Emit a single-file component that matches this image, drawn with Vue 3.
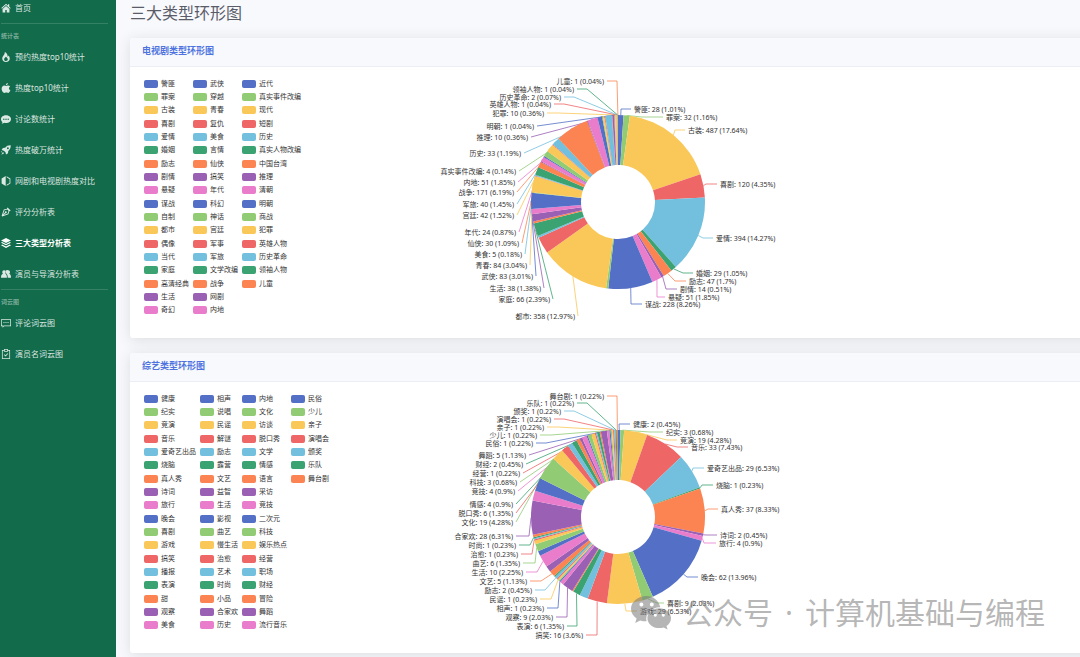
<template>
  <div class="layout">
    <!-- 侧边栏 -->
    <nav class="sidebar">
      <a href="#" class="nav-link home">
        <svg class="icon" viewBox="0 0 16 16"><path d="M8 1 0.5 8l1 1.200L8 3.200l6.500 6 1-1.200L13.200 5.800V2h-2v2zM8 4.600 2.500 9.700V15h4.300v-4h2.400v4h4.300V9.700z" /></svg>
        <span>首页</span>
      </a>
      <template v-for="group in menu" :key="group.title">
        <hr class="divider" />
        <div class="group-title">{{ group.title }}</div>
        <a v-for="item in group.items" :key="item.text" href="#" class="nav-link"
          :class="{ active: item.text === current }" @click.prevent="current = item.text">
          <svg class="icon" viewBox="0 0 16 16"><path :d="icons[item.icon]" fill-rule="evenodd" /></svg>
          <span>{{ item.text }}</span>
        </a>
      </template>
    </nav>

    <!-- 主内容 -->
    <main class="content">
      <h1 class="page-title">三大类型环形图</h1>
      <section v-for="chart in charts" :key="chart.title" class="card">
        <h2 class="card-header">{{ chart.title }}</h2>
        <div class="card-body">
          <ul class="legend">
            <li v-for="s in chart.slices" :key="s.name">
              <i class="swatch" :style="{ background: s.color }"></i>{{ s.name }}
            </li>
          </ul>
          <svg class="donut" viewBox="-190 -128 380 250" role="img" :aria-label="chart.title">
            <!-- 引线在扇形下层 -->
            <polyline v-for="s in chart.labels" :key="s.name" :points="s.line" :stroke="s.color" class="guide" />
            <path v-for="s in chart.slices" :key="s.name" :d="s.path" :fill="s.color" />
            <text v-for="s in chart.labels" :key="s.name" :x="s.textX" :y="s.y" :text-anchor="s.anchor"
              class="label">{{ s.text }}</text>
          </svg>
        </div>
      </section>
    </main>

    <!-- 水印 -->
    <div class="watermark">
      <svg class="wechat" viewBox="0 0 40 34">
        <path fill-rule="evenodd" d="M15.500 0C7 0 0 5.700 0 12.800c0 4 2.200 7.400 5.600 9.800L4.200 27l5-2.600c2 .6 4 1 6.300.9-1.600-7.300 4.500-14 13.800-14C28 4.800 22.300 0 15.500 0zM10.400 6.500a2 2 0 1 1 0 4 2 2 0 0 1 0-4zm10.400 0a2 2 0 1 1 0 4 2 2 0 0 1 0-4z" />
        <path fill-rule="evenodd" d="M28.300 12.300c-6.700 0-11.900 4.400-11.900 9.900s5.200 9.900 11.900 9.900c1.500 0 3-.3 4.300-.7l4 2.200-1.100-3.700c2.800-1.800 4.500-4.600 4.500-7.700 0-5.500-5.200-9.900-11.700-9.900zm-4 5.200a1.600 1.600 0 1 1 0 3.200 1.600 1.600 0 0 1 0-3.200zm8 0a1.600 1.600 0 1 1 0 3.200 1.600 1.600 0 0 1 0-3.200z" />
      </svg>
      <span>公众号</span>
      <span>·</span>
      <span>计算机基础与编程</span>
    </div>
  </div>
</template>

<script setup>
import { ref } from 'vue'

const current = ref('三大类型分析表')

const menu = [
  {
    title: '统计表',
    items: [
      { text: '预约热度top10统计', icon: 'fire' },
      { text: '热度top10统计', icon: 'apple' },
      { text: '讨论数统计', icon: 'chat' },
      { text: '热度破万统计', icon: 'rocket' },
      { text: '网剧和电视剧热度对比', icon: 'half' },
      { text: '评分分析表', icon: 'pen' },
      { text: '三大类型分析表', icon: 'layers' },
      { text: '演员与导演分析表', icon: 'people' }
    ]
  },
  {
    title: '词云图',
    items: [
      { text: '评论词云图', icon: 'message' },
      { text: '演员名词云图', icon: 'clipboard' }
    ]
  }
]

const icons = {
  fire: 'M8 16c3.500 0 6-2.200 6-5.600 0-2-.8-3.600-2-4.900-.2 1-.7 1.700-1.500 2.100C11 4.500 9.200 1.300 6 0c.3 2.700-.8 4-2 5.500C2.800 7 2 8.400 2 10.400 2 13.800 4.500 16 8 16zm0-1.500c-1.800 0-3-1.200-3-2.900 0-1.600 1.200-2.500 2.600-4.200 1.800 1.200 3.300 2.500 3.300 4.300 0 1.600-1.200 2.800-2.900 2.800z',
  apple: 'M11 0c.2 1.800-1.400 3.700-3.200 3.700C7.600 2 9.200.2 11 0zM8.200 4.600c.8 0 1.700-.8 3-.8 1.500 0 2.600.7 3.300 1.700-2.700 1.600-2.300 5 .5 6.100-.8 2-2.100 4.200-3.700 4.200-1.200 0-1.600-.7-3-.7s-1.900.7-3 .7C3 15.800 1 12.400 1 9.200 1 6 3 4 5.200 4c1.300 0 2.200.6 3 .6z',
  chat: 'M8 2c4.400 0 8 2.700 8 6.200s-3.600 6.200-8 6.200c-.9 0-1.800-.1-2.600-.3C4.500 14.700 2.900 15.500 1 15.700c.7-.9 1.100-1.800 1.200-2.800C.8 11.700 0 10 0 8.200 0 4.700 3.600 2 8 2zM4.500 7a1.200 1.200 0 1 0 0 2.400 1.200 1.200 0 0 0 0-2.400zM8 7a1.200 1.200 0 1 0 0 2.400A1.200 1.200 0 0 0 8 7zm3.500 0a1.200 1.200 0 1 0 0 2.400 1.200 1.200 0 0 0 0-2.400z',
  rocket: 'M15.500.5c.3 4-1 6.700-4 9.300l-.3 3.200-3.200 2-.8-3.500L4.500 9 1 8l2-3.200 3.500-.3C9 1.500 11.500.3 15.500.5zM11 3.600a1.500 1.500 0 1 0 0 3 1.500 1.500 0 0 0 0-3zM3 11l2 2-4.500 2.500zM0 10l1.500.5L0 12.500z',
  half: 'M7.500 0v16L1 12V4zM9 .3l6 3.800v7.800l-6 3.800v-1.600l4.700-3V5L9 2z',
  pen: 'M10.600.6l4.800 4.800-1.200 1.200-.8-.4-1.500 5.300L2 15l-1-1 3.500-9.900 5.300-1.500-.4-.8zM10 4 5.600 5.200 3.300 11.800l3-3a1.500 1.500 0 1 1 1 1l-3 3 6.500-2.300L12 6z',
  layers: 'M8 0l8 4-8 4-8-4zM1.800 6.500 8 9.600l6.200-3.100L16 7.400l-8 4-8-4zM1.800 10.500 8 13.600l6.200-3.100 1.800.9L8 16l-8-4.600z',
  people: 'M5 2a3 3 0 0 1 1.800 5.400C8.500 8 9.500 9.500 9.500 14H0c0-4.500 1.200-6 3.200-6.600A3 3 0 0 1 5 2zm6.500 0a3 3 0 0 1 1.700 5.400C15 8 16 9.500 16 14h-5.200c0-3.500-.6-5.500-2-6.600A3 3 0 0 1 11.500 2z',
  message: 'M0 2h16v11H5l-2.500 2.500V13H0zm1.200 1.200v8.600h2.500v1l1-1h10.100V3.200zM4 6.500h1.500V8H4zm3.200 0h1.500V8H7.200zm3.300 0H12V8h-1.500z',
  clipboard: 'M5 0h6v1.500h3.500V16h-13V1.500H5zm1.200 1.200v2h3.600v-2zM5 2.700H2.700v12.100h10.600V2.700H11v1.700H5zm5.600 4 .9.900-4.200 4.200L4.800 9.400l.9-.9 1.600 1.600z'
}

const palette = ['#5470c6', '#91cc75', '#fac858', '#ee6666', '#73c0de', '#3ba272', '#fc8452', '#9a60b4', '#ea7ccc']

// [名称, 数值, 占比, 引线终点x, 引线y, 拐点x]，没有占比的不显示标签
const tvData = [
  ['警匪', 28, '1.01', 13, -93, 3],
  ['罪案', 32, '1.16', 45, -85, 24],
  ['古装', 487, '17.64', 67, -72, 57],
  ['喜剧', 120, '4.35', 99, -18, 88],
  ['爱情', 394, '14.27', 95, 36, 85],
  ['婚姻', 29, '1.05', 75, 71, 65],
  ['励志', 47, '1.7', 68, 79, 57],
  ['剧情', 14, '0.51', 59, 87, 48],
  ['悬疑', 51, '1.85', 47, 95, 39],
  ['谋战', 228, '8.26', 24, 102, 13],
  ['自制', 11],
  ['都市', 358, '12.97', -40, 114, -40],
  ['偶像', 86],
  ['当代', 10],
  ['家庭', 66, '2.39', -65, 97, -65],
  ['高清经典', 10],
  ['生活', 38, '1.38', -74, 86, -74],
  ['奇幻', 26],
  ['武侠', 83, '3.01', -82, 74, -82],
  ['穿越', 2],
  ['青春', 84, '3.04', -88, 63, -88],
  ['复仇', 2],
  ['美食', 5, '0.18', -93, 52, -93],
  ['言情', 40],
  ['仙侠', 30, '1.09', -96, 41, -96],
  ['搞笑', 4],
  ['年代', 24, '0.87', -99, 30, -99],
  ['科幻', 7],
  ['神话', 28],
  ['宫廷', 42, '1.52', -101, 13, -101],
  ['军事', 3],
  ['军旅', 40, '1.45', -101, 2, -101],
  ['文学改编', 1],
  ['战争', 171, '6.19', -101, -10, -101],
  ['网剧', 4],
  ['内地', 51, '1.85', -100, -20, -100],
  ['近代', 24],
  ['真实事件改编', 4, '0.14', -99, -31, -99],
  ['现代', 8],
  ['短剧', 4],
  ['历史', 33, '1.19', -94, -49, -94],
  ['真实人物改编', 1],
  ['中国台湾', 2],
  ['推理', 10, '0.36', -87, -65, -87],
  ['清朝', 2],
  ['明朝', 1, '0.04', -81, -76, -81],
  ['商战', 1],
  ['犯罪', 10, '0.36', -71, -89, -60],
  ['英雄人物', 1, '0.04', -64, -98, -54],
  ['历史革命', 2, '0.07', -54, -105, -44],
  ['领袖人物', 1, '0.04', -41, -113, -31],
  ['儿童', 1, '0.04', -11, -121, -1]
]

const varietyData = [
  ['健康', 2, '0.45', 12, -93, 1],
  ['纪实', 3, '0.68', 45, -85, 32],
  ['竞演', 19, '4.28', 59, -77, 49],
  ['音乐', 33, '7.43', 70, -70, 59],
  ['爱奇艺出品', 29, '6.53', 86, -49, 75],
  ['烧脑', 1, '0.23', 95, -32, 84],
  ['真人秀', 37, '8.33', 100, -8, 90],
  ['诗词', 2, '0.45', 99, 18, 89],
  ['旅行', 4, '0.9', 98, 26, 86],
  ['晚会', 62, '13.96', 80, 60, 69],
  ['喜剧', 9, '2.03', 46, 86, 39],
  ['游戏', 29, '6.53', 19, 94, 8],
  ['搞笑', 16, '3.6', -32, 118, -21],
  ['播报', 7],
  ['表演', 6, '1.35', -51, 109, -41],
  ['甜', 1],
  ['观察', 9, '2.03', -62, 100, -51],
  ['美食', 3],
  ['相声', 1, '0.23', -71, 91, -60],
  ['说唱', 1],
  ['民谣', 1, '0.23', -78, 82, -67],
  ['解谜', 1],
  ['励志', 2, '0.45', -83, 73, -73],
  ['露营', 1],
  ['文艺', 5, '1.13', -88, 64, -77],
  ['益智', 5],
  ['生活', 10, '2.25', -92, 55, -81],
  ['影视', 4],
  ['曲艺', 6, '1.35', -95, 46, -83],
  ['慢生活', 3],
  ['治愈', 1, '0.23', -97, 37, -86],
  ['艺术', 1],
  ['时尚', 1, '0.23', -99, 28, -88],
  ['小品', 2],
  ['合家欢', 28, '6.31', -102, 19, -89],
  ['历史', 8],
  ['内地', 11],
  ['文化', 19, '4.28', -102, 5, -102],
  ['访谈', 10],
  ['脱口秀', 6, '1.35', -102, -4, -102],
  ['文学', 4],
  ['情感', 4, '0.9', -102, -13, -102],
  ['语言', 3],
  ['采访', 2],
  ['竞技', 4, '0.9', -100, -26, -100],
  ['二次元', 1],
  ['科技', 3, '0.68', -98, -35, -98],
  ['娱乐热点', 3],
  ['经营', 1, '0.22', -95, -44, -95],
  ['职场', 1],
  ['财经', 2, '0.45', -92, -53, -92],
  ['冒险', 1],
  ['舞蹈', 5, '1.13', -89, -62, -89],
  ['流行音乐', 2],
  ['民俗', 1, '0.22', -82, -74, -72],
  ['少儿', 1, '0.22', -78, -82, -67],
  ['亲子', 1, '0.22', -71, -90, -60],
  ['演唱会', 1, '0.22', -64, -98, -54],
  ['颁奖', 1, '0.22', -54, -106, -44],
  ['乐队', 1, '0.22', -41, -114, -31],
  ['舞台剧', 1, '0.22', -11, -121, -1]
]

const OUTER = 87
const INNER = 37

// 从正上方开始顺时针
const point = (r, angle) => `${(r * Math.sin(angle)).toFixed(2)},${(-r * Math.cos(angle)).toFixed(2)}`

const buildChart = (title, data) => {
  const total = data.reduce((sum, d) => sum + d[1], 0)
  let start = 0
  const slices = data.map(([name, value, percent, x, y, bend], i) => {
    const end = start + (value / total) * Math.PI * 2
    const mid = (start + end) / 2
    const path = `M${point(OUTER, start)}A${OUTER},${OUTER} 0 0 1 ${point(OUTER, end)}L${point(INNER, end)}A${INNER},${INNER} 0 0 0 ${point(INNER, start)}Z`
    start = end
    return {
      name,
      percent,
      y,
      path,
      color: palette[i % palette.length],
      line: `${point(OUTER, mid)} ${bend},${y} ${x},${y}`,
      textX: x > 0 ? x + 3 : x - 3,
      anchor: x > 0 ? 'start' : 'end',
      text: `${name}: ${value} (${percent}%)`
    }
  })
  return { title, slices, labels: slices.filter(s => s.percent) }
}

const charts = [
  buildChart('电视剧类型环形图', tvData),
  buildChart('综艺类型环形图', varietyData)
]
</script>

<style>
body {
  background: #f8f9fc;
}
</style>

<style scoped>
.layout {
  display: flex;
  min-height: 100vh;
  overflow: hidden;
  position: relative;
  font-family: "Noto Sans", "Noto Sans CJK SC", sans-serif;
}

.sidebar {
  flex: 0 0 116px;
  box-sizing: border-box;
  padding: 0 8px 0 1px;
  background: #126b4a;
}

.nav-link {
  display: flex;
  align-items: center;
  gap: 4px;
  height: 31px;
  color: rgba(255, 255, 255, 0.85);
  font-size: 8px;
  line-height: 12px;
  text-decoration: none;
  white-space: nowrap;
}

.nav-link.home {
  height: 16px;
  margin-bottom: 7px;
}

.nav-link.active {
  color: #ffffff;
  font-weight: 700;
}

.icon {
  width: 10px;
  height: 10px;
  fill: currentColor;
}

.divider {
  margin: 0;
  border: 0;
  border-top: 1px solid rgba(255, 255, 255, 0.15);
}

.group-title {
  display: flex;
  align-items: flex-end;
  height: 17px;
  color: rgba(255, 255, 255, 0.45);
  font-size: 6px;
  line-height: 10px;
  font-weight: 700;
}

.content {
  flex: 1;
  min-width: 0;
  /* 卡片右侧超出可视区域 */
  margin-right: -26px;
  padding-left: 14px;
}

.page-title {
  margin: 0 0 13px;
  padding-top: 1px;
  color: #5a5c69;
  font-size: 16px;
  line-height: 24px;
  font-weight: 400;
}

.card {
  margin-bottom: 15px;
  background: #ffffff;
  border-radius: 3px;
  box-shadow: 0 2px 14px rgba(58, 59, 69, 0.15);
}

.card-header {
  margin: 0;
  padding: 5px 12px 7px;
  border-bottom: 1px solid #eceef5;
  border-radius: 3px 3px 0 0;
  background: #f8f9fc;
  color: #4e73df;
  font-size: 9px;
  line-height: 16px;
  font-weight: 700;
}

.card-body {
  display: grid;
  grid-template-columns: 1fr 380px 1fr;
  padding: 7px 14px 14px;
}

.legend {
  display: grid;
  grid-auto-flow: column;
  grid-template-rows: repeat(18, 1fr);
  justify-content: start;
  column-gap: 4px;
  height: 240px;
  margin: 3px 0 0;
  padding: 0;
  list-style: none;
}

.legend li {
  display: flex;
  align-items: center;
  gap: 3px;
  color: #333333;
  font-size: 7px;
  line-height: 10px;
  white-space: nowrap;
}

.swatch {
  width: 14px;
  height: 8px;
  border-radius: 2px;
}

.donut {
  display: block;
  width: 380px;
  height: 250px;
}

.guide {
  fill: none;
  stroke-width: 1;
  opacity: 0.8;
}

.label {
  fill: #333333;
  font-size: 7px;
  dominant-baseline: central;
}

.watermark {
  position: absolute;
  right: 35px;
  bottom: 33px;
  display: flex;
  align-items: center;
  gap: 12px;
  color: rgba(120, 120, 120, 0.55);
  font-size: 30px;
  line-height: 44px;
  font-weight: 400;
  pointer-events: none;
}

.wechat {
  width: 40px;
  height: 34px;
  fill: currentColor;
}
</style>
